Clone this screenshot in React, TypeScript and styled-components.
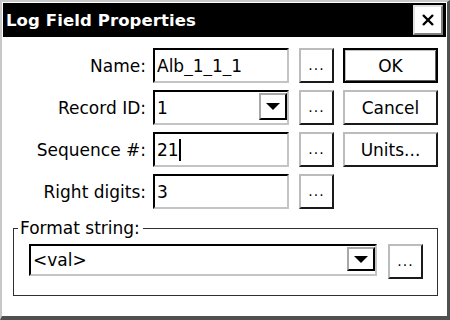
import React from "react";
import styled, { createGlobalStyle } from "styled-components";

const Global = createGlobalStyle`
  html, body { margin: 0; padding: 0; background: #fff; }
  body { font-family: "DejaVu Sans", sans-serif; }
`;

const Window = styled.div`
  box-sizing: border-box;
  width: 450px;
  height: 320px;
  background: #fff;
  border-style: solid;
  border-width: 2px 3px 4px 2px;
  border-color: #c8c8c8 #505050 #505050 #c8c8c8;
  display: flex;
  flex-direction: column;
  padding: 1px 1px 0 1px;
`;

const TitleBar = styled.div`
  height: 34px;
  background: #000;
  color: #fff;
  display: flex;
  align-items: center;
  justify-content: space-between;
  padding: 0 3px 0 3px;
  flex: none;
`;

const Title = styled.span`
  font-family: "DejaVu Sans", sans-serif;
  font-weight: bold;
  font-size: 16.5px;
  letter-spacing: 0.1px;
`;

const CloseBox = styled.div`
  box-sizing: border-box;
  width: 30px;
  height: 30px;
  background: #fff;
  border-style: solid;
  border-width: 2px;
  border-color: #e0e0e0 #808080 #808080 #e0e0e0;
  display: flex;
  align-items: center;
  justify-content: center;
`;

const Body = styled.div`
  flex: 1;
  padding: 11px 0 0 0;
  display: flex;
  flex-direction: column;
`;

const FormGrid = styled.div`
  display: grid;
  grid-template-columns: 150px 136px 45px 104px;
  grid-auto-rows: 35px;
  row-gap: 7px;
  align-items: center;
`;

const Label = styled.label`
  font-size: 17px;
  color: #000;
  text-align: right;
  padding-right: 7px;
  white-space: nowrap;
`;

const Field = styled.div<{ $h?: number; $w?: number }>`
  box-sizing: border-box;
  height: ${(p) => p.$h ?? 35}px;
  width: ${(p) => (p.$w ? `${p.$w}px` : "100%")};
  background: #fff;
  border-style: solid;
  border-width: 2px;
  border-color: #000 #c4c4c4 #c4c4c4 #000;
  display: flex;
  align-items: center;
  font-size: 17px;
  padding-left: 2px;
`;

const FieldText = styled.span`
  flex: 1;
  white-space: nowrap;
  overflow: hidden;
  display: flex;
  align-items: center;
`;

const Caret = styled.span`
  display: inline-block;
  width: 2px;
  height: 22px;
  background: #000;
`;

const DropBtn = styled.div`
  box-sizing: border-box;
  width: 28px;
  align-self: stretch;
  margin: 1px 0 3px 0;
  border-style: solid;
  border-width: 2px;
  border-color: #a8a8a8 #000 #000 #a8a8a8;
  display: flex;
  align-items: center;
  justify-content: center;
  background: #fff;
`;

const Tri = styled.span`
  width: 0;
  height: 0;
  border-left: 7px solid transparent;
  border-right: 7px solid transparent;
  border-top: 7px solid #000;
`;

const Dots = styled.div<{ $ml?: number }>`
  box-sizing: border-box;
  width: 35px;
  height: 35px;
  margin-left: ${(p) => p.$ml ?? 10}px;
  border-style: solid;
  border-width: 2px;
  border-color: #bcbcbc #1a1a1a #1a1a1a #bcbcbc;
  background: #fff;
  display: flex;
  align-items: flex-end;
  justify-content: center;
  padding-bottom: 9px;
  font-size: 14px;
  letter-spacing: 1px;
  line-height: 1;
  color: #000;
`;

const Cell = styled.div``;

const Button = styled.div<{ $def?: boolean }>`
  box-sizing: border-box;
  width: 95px;
  height: 35px;
  margin-left: 9px;
  background: #fff;
  border-style: solid;
  border-width: 2px;
  border-color: ${(p) => (p.$def ? "#000" : "#bcbcbc #1a1a1a #1a1a1a #bcbcbc")};
  box-shadow: ${(p) =>
    p.$def ? "inset 1px 1px 0 #c0c0c0, inset -1px -1px 0 #606060" : "none"};
  display: flex;
  align-items: center;
  justify-content: center;
  font-size: 17px;
  color: #000;
`;

const Group = styled.fieldset`
  margin: 9px 0 0 10px;
  width: 425px;
  box-sizing: border-box;
  height: 78px;
  border: 1.5px solid #303030;
  padding: 6px 0 0 15px;
  display: flex;
  align-items: flex-start;
`;

const Legend = styled.legend`
  font-size: 17px;
  padding: 0 3px 0 2px;
  margin-left: -11px;
  line-height: 20px;
`;

const GroupRow = styled.div`
  display: flex;
  align-items: flex-start;
`;

const X = () => (
  <svg width="16" height="16" viewBox="0 0 16 16">
    <path d="M3 3 L13 13 M13 3 L3 13" stroke="#000" strokeWidth="2.4" />
  </svg>
);

export default function App() {
  return (
    <>
      <Global />
      <Window>
        <TitleBar>
          <Title>Log Field Properties</Title>
          <CloseBox>
            <X />
          </CloseBox>
        </TitleBar>
        <Body>
          <FormGrid>
            <Label>Name:</Label>
            <Field>
              <FieldText>Alb_1_1_1</FieldText>
            </Field>
            <Dots>...</Dots>
            <Button $def>OK</Button>

            <Label>Record ID:</Label>
            <Field>
              <FieldText>1</FieldText>
              <DropBtn>
                <Tri />
              </DropBtn>
            </Field>
            <Dots>...</Dots>
            <Button>Cancel</Button>

            <Label>Sequence #:</Label>
            <Field>
              <FieldText>
                21
                <Caret />
              </FieldText>
            </Field>
            <Dots>...</Dots>
            <Button>Units...</Button>

            <Label>Right digits:</Label>
            <Field>
              <FieldText>3</FieldText>
            </Field>
            <Dots>...</Dots>
            <Cell />
          </FormGrid>
          <Group>
            <Legend>Format string:</Legend>
            <GroupRow>
              <Field $h={32} $w={348}>
                <FieldText>&lt;val&gt;</FieldText>
                <DropBtn>
                  <Tri />
                </DropBtn>
              </Field>
              <Dots $ml={11}>...</Dots>
            </GroupRow>
          </Group>
        </Body>
      </Window>
    </>
  );
}
